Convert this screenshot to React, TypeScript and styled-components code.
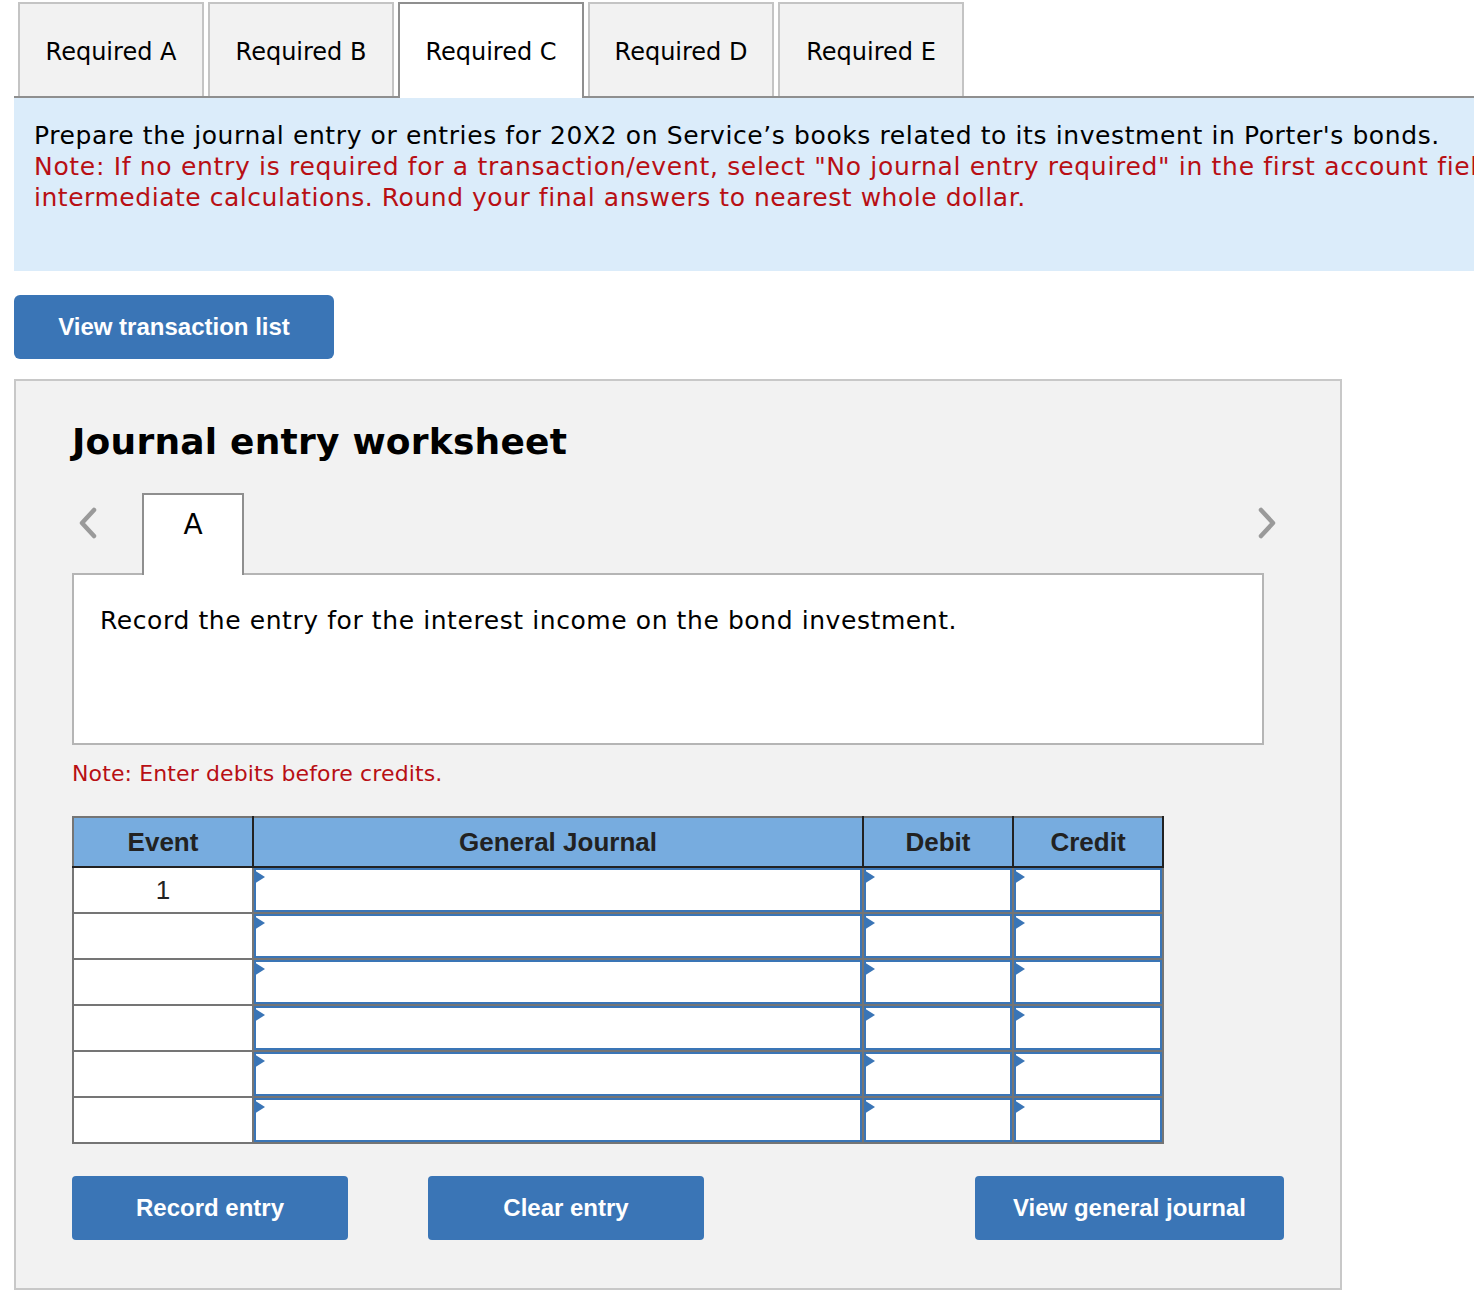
import React from "react";
import styled, { createGlobalStyle } from "styled-components";

const GlobalStyle = createGlobalStyle`
  html, body {
    margin: 0;
    padding: 0;
    background: #fff;
  }
  * {
    box-sizing: border-box;
  }
`;

const Page = styled.div`
  width: 1474px;
  height: 1290px;
  overflow: hidden;
  padding: 2px 0 0 14px;
  font-family: "DejaVu Sans", Verdana, sans-serif;
  color: #000;
`;

const TabBar = styled.div`
  display: flex;
  gap: 4px;
  padding-left: 4px;
  height: 96px;
  border-bottom: 2px solid #8f8f8f;
`;

const Tab = styled.div<{ $active?: boolean }>`
  width: 186px;
  height: ${(p) => (p.$active ? "96px" : "94px")};
  display: flex;
  align-items: center;
  justify-content: center;
  padding-top: ${(p) => (p.$active ? "2px" : "4px")};
  font-size: 24px;
  background: ${(p) => (p.$active ? "#fff" : "#f2f2f2")};
  border: 2px solid ${(p) => (p.$active ? "#8f8f8f" : "#c4c4c4")};
  border-bottom: none;
  position: relative;
  z-index: 1;
`;

const Instructions = styled.div`
  height: 173px;
  padding: 22px 0 0 20px;
  background: #dbecfa;
  font-size: 25px;
  line-height: 31px;
  letter-spacing: 0.6px;
  white-space: nowrap;
  overflow: hidden;
`;

const RedLine = styled.div<{ $spacing: number }>`
  color: #b80f14;
  letter-spacing: ${(p) => p.$spacing}px;
`;

const ListButton = styled.button`
  display: block;
  width: 320px;
  height: 64px;
  margin: 24px 0 20px;
  border: none;
  border-radius: 6px;
  background: #3a75b6;
  color: #fff;
  font-family: "Liberation Sans", Arial, sans-serif;
  font-weight: 700;
  font-size: 24px;
`;

const Worksheet = styled.section`
  width: 1328px;
  height: 911px;
  padding: 36px 56px 0;
  background: #f2f2f2;
  border: 2px solid #c8c8c8;
`;

const Title = styled.h2`
  margin: 0;
  font-size: 36px;
  line-height: 50px;
  font-weight: 700;
  letter-spacing: 0.22px;
`;

const Pager = styled.div`
  display: flex;
  width: 1192px;
  height: 82px;
  margin-top: 26px;
  position: relative;
  z-index: 1;
`;

const Chevron = styled.svg`
  width: 22px;
  height: 34px;
  margin-top: 13px;
  fill: none;
  stroke: #9a9a9a;
  stroke-width: 4.5;
  stroke-linecap: round;
  stroke-linejoin: round;
  flex: none;
`;

const PrevChevron = styled(Chevron)`
  margin-left: 5px;
`;

const NextChevron = styled(Chevron)`
  margin-left: 1012px;
`;

const PageTab = styled.div`
  width: 102px;
  height: 82px;
  flex: none;
  margin-left: 43px;
  padding-top: 13px;
  text-align: center;
  font-size: 28px;
  line-height: 34px;
  background: #fff;
  border: 2px solid #8f8f8f;
  border-bottom: none;
`;

const Prompt = styled.div`
  width: 1192px;
  height: 172px;
  margin-top: -2px;
  padding: 30px 26px 0;
  background: #fff;
  border: 2px solid #b5b5b5;
  font-size: 25px;
  line-height: 31px;
  letter-spacing: 0.58px;
`;

const Note = styled.p`
  margin: 14px 0 0;
  font-size: 22px;
  line-height: 30px;
  letter-spacing: 0.12px;
  color: #b80f14;
`;

const Journal = styled.table`
  width: 1090px;
  margin-top: 27px;
  table-layout: fixed;
  border-collapse: collapse;
  font-family: "Liberation Sans", Arial, sans-serif;
  color: #222;
  border: 2px solid #757575;
`;

const HeadCell = styled.th`
  height: 50px;
  padding: 0;
  background: #77acdf;
  font-size: 26px;
  font-weight: 700;
  border-left: 2px solid #222;
  border-right: 2px solid #222;
  border-bottom: 2px solid #222;
  border-top: 2px solid #757575;

  &:first-child {
    border-left: 2px solid #757575;
  }
`;

const EventCell = styled.td`
  height: 46px;
  padding: 0;
  background: #fff;
  text-align: center;
  font-size: 26px;
  border: 2px solid #757575;
`;

const EntryCell = styled.td`
  height: 46px;
  padding: 0;
  background: #fff;
  border: 2px solid #757575;
`;

const EntryField = styled.div`
  height: 44px;
  position: relative;
  border: 2px solid #3a75b6;
  background: #fff;

  &::before {
    content: "";
    position: absolute;
    left: -2px;
    top: 0;
    border-left: 11px solid #3a75b6;
    border-top: 7px solid transparent;
    border-bottom: 7px solid transparent;
  }
`;

const Actions = styled.div`
  display: flex;
  gap: 80px;
  width: 1212px;
  margin-top: 32px;
`;

const ActionButton = styled.button<{ $width: number; $push?: boolean }>`
  width: ${(p) => p.$width}px;
  height: 64px;
  margin-left: ${(p) => (p.$push ? "auto" : "0")};
  border: none;
  border-radius: 4px;
  background: #3a75b6;
  color: #fff;
  font-family: "Liberation Sans", Arial, sans-serif;
  font-weight: 700;
  font-size: 24px;
`;

const tabs = ["Required A", "Required B", "Required C", "Required D", "Required E"];
const rows = [1, 2, 3, 4, 5, 6];

export default function App() {
  return (
    <Page>
      <GlobalStyle />
      <TabBar>
        {tabs.map((t) => (
          <Tab key={t} $active={t === "Required C"}>
            {t}
          </Tab>
        ))}
      </TabBar>
      <Instructions>
        <div>Prepare the journal entry or entries for 20X2 on Service’s books related to its investment in Porter's bonds.</div>
        <RedLine $spacing={0.68}>Note: If no entry is required for a transaction/event, select "No journal entry required" in the first account field.</RedLine>
        <RedLine $spacing={0.53}>intermediate calculations. Round your final answers to nearest whole dollar.</RedLine>
      </Instructions>
      <ListButton>View transaction list</ListButton>
      <Worksheet>
        <Title>Journal entry worksheet</Title>
        <Pager>
          <PrevChevron viewBox="0 0 22 34">
            <path d="M17 4 L5 17 L17 30" />
          </PrevChevron>
          <PageTab>A</PageTab>
          <NextChevron viewBox="0 0 22 34">
            <path d="M5 4 L17 17 L5 30" />
          </NextChevron>
        </Pager>
        <Prompt>Record the entry for the interest income on the bond investment.</Prompt>
        <Note>Note: Enter debits before credits.</Note>
        <Journal>
          <colgroup>
            <col style={{ width: 180 }} />
            <col style={{ width: 610 }} />
            <col style={{ width: 150 }} />
            <col style={{ width: 150 }} />
          </colgroup>
          <thead>
            <tr>
              <HeadCell>Event</HeadCell>
              <HeadCell>General Journal</HeadCell>
              <HeadCell>Debit</HeadCell>
              <HeadCell>Credit</HeadCell>
            </tr>
          </thead>
          <tbody>
            {rows.map((r) => (
              <tr key={r}>
                <EventCell>{r === 1 ? "1" : ""}</EventCell>
                <EntryCell><EntryField /></EntryCell>
                <EntryCell><EntryField /></EntryCell>
                <EntryCell><EntryField /></EntryCell>
              </tr>
            ))}
          </tbody>
        </Journal>
        <Actions>
          <ActionButton $width={276}>Record entry</ActionButton>
          <ActionButton $width={276}>Clear entry</ActionButton>
          <ActionButton $width={309} $push>View general journal</ActionButton>
        </Actions>
      </Worksheet>
    </Page>
  );
}
